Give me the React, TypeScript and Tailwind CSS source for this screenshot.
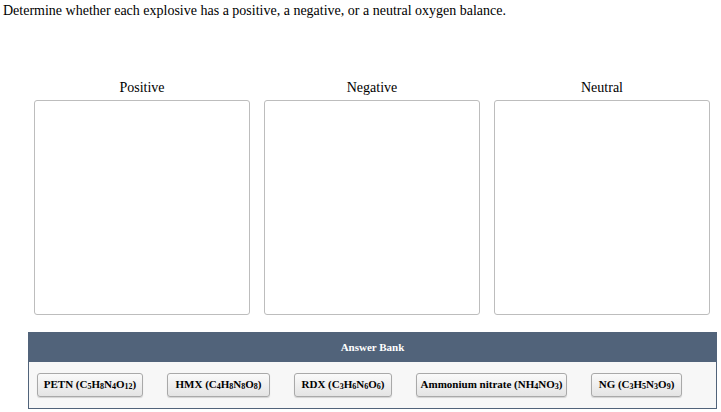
import React from 'react';

type Part = string | { sub: string };

const items: { id: string; width: string; parts: Part[] }[] = [
    { id: 'petn', width: 'w-[106px]', parts: ['PETN (C', { sub: '5' }, 'H', { sub: '8' }, 'N', { sub: '4' }, 'O', { sub: '12' }, ')'] },
    { id: 'hmx', width: 'w-[103px]', parts: ['HMX (C', { sub: '4' }, 'H', { sub: '8' }, 'N', { sub: '8' }, 'O', { sub: '8' }, ')'] },
    { id: 'rdx', width: 'w-[98px]', parts: ['RDX (C', { sub: '3' }, 'H', { sub: '6' }, 'N', { sub: '6' }, 'O', { sub: '6' }, ')'] },
    { id: 'an', width: 'w-[151px]', parts: ['Ammonium nitrate (NH', { sub: '4' }, 'NO', { sub: '3' }, ')'] },
    { id: 'ng', width: 'w-[91px]', parts: ['NG (C', { sub: '3' }, 'H', { sub: '5' }, 'N', { sub: '3' }, 'O', { sub: '9' }, ')'] },
];

const bins = ['Positive', 'Negative', 'Neutral'];

const Formula: React.FC<{ parts: Part[] }> = ({ parts }) => (
    <>
        {parts.map((p, i) =>
            typeof p === 'string' ? (
                <span key={i}>{p}</span>
            ) : (
                <span key={i} className="text-[8px] relative top-[3px]">{p.sub}</span>
            )
        )}
    </>
);

export default function App() {
    return (
        <div className="w-[721px] h-[412px] bg-white text-black overflow-hidden" style={{ fontFamily: '"Liberation Serif", "Times New Roman", serif' }}>
            {/* Question text */}
            <p className="pl-[3px] pt-[2px] text-[14px] leading-[17px]">
                Determine whether each explosive has a positive, a negative, or a neutral oxygen balance.
            </p>

            {/* Drop targets */}
            <div className="flex gap-[14px] ml-[34px] mt-[60px]">
                {bins.map(label => (
                    <div key={label} className="w-[216px] flex flex-col items-center">
                        <div className="text-[14px] leading-[17px] mb-[4px]">{label}</div>
                        <div className="w-full h-[215px] border border-[#bdbdbd] rounded-[3px] bg-white" />
                    </div>
                ))}
            </div>

            {/* Answer bank */}
            <div className="ml-[28px] mr-[4px] mt-[17px] border border-[#51637a]">
                <div className="h-[29px] bg-[#51637a] flex items-center justify-center text-white text-[11px] font-bold">
                    Answer Bank
                </div>
                <div className="bg-[#f7f7f7] flex items-center gap-[24px] pl-[8px] pt-[11px] pb-[11px]">
                    {items.map(item => (
                        <button
                            key={item.id}
                            className={`${item.width} h-[24px] pb-[2px] flex items-center justify-center border border-[#a9a9a9] rounded-[3px] bg-gradient-to-b from-[#fafafa] to-[#e4e4e4] text-[11px] font-bold leading-none whitespace-nowrap shadow-[0_1px_1px_rgba(0,0,0,0.15)]`}
                        >
                            <Formula parts={item.parts} />
                        </button>
                    ))}
                </div>
            </div>
        </div>
    );
}
